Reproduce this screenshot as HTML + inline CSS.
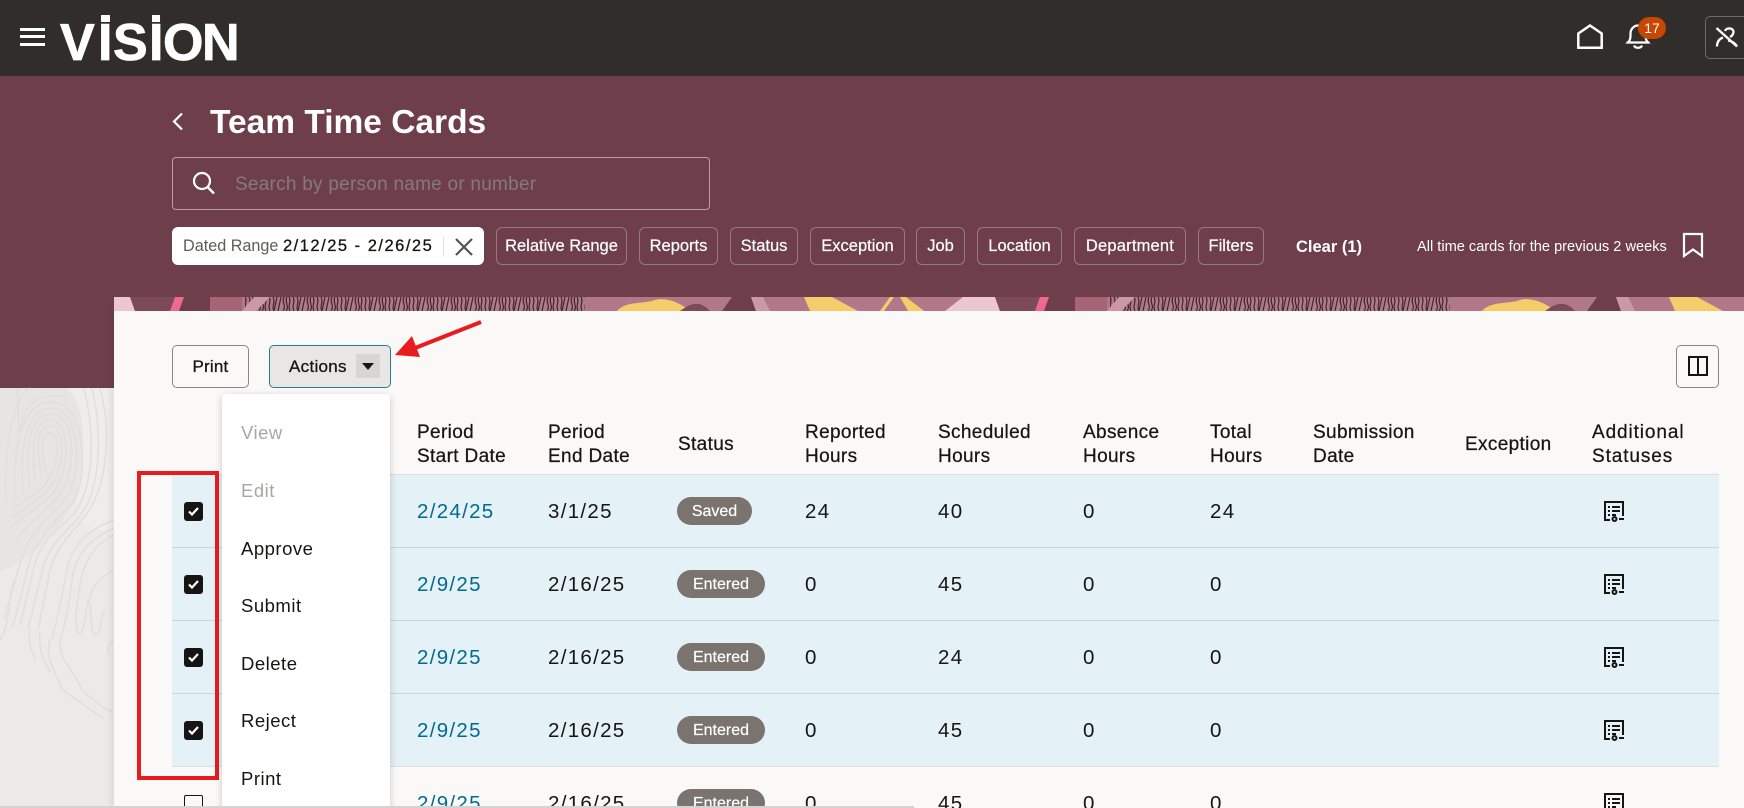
<!DOCTYPE html>
<html><head><meta charset="utf-8"><title>Team Time Cards</title>
<style>
html,body{margin:0;padding:0;width:1744px;height:808px;overflow:hidden}
#w{position:relative;width:1744px;height:808px;overflow:hidden;background:#ebeae8;font-family:"Liberation Sans",sans-serif;color:#161513;font-size:20.5px}
.a,.t,.c,.p,.b{position:absolute}
.t{white-space:nowrap;line-height:24px}
.c{top:227px;height:36px;border:1px solid rgba(255,255,255,.3);border-radius:6px;color:#fff;text-align:center;line-height:36px;font-size:16.5px;-webkit-text-stroke:.2px #fff;white-space:nowrap}
.h{font-size:19px;-webkit-text-stroke:.25px #161513;letter-spacing:.35px}
.d{letter-spacing:1.3px}
.l{color:#006b8f}
.p{left:677px;height:28px;border-radius:14px;background:#7a736e;color:#fff;text-align:center;font-size:16px;line-height:30px;-webkit-text-stroke:.2px #fff}
.r{position:absolute;left:172px;width:1547px;height:72px;background:#e4f1f7;border-bottom:1px solid #c9d6dd}
.b{left:184px;width:19px;height:19px;background:#161513;border-radius:3px}
.m{left:241px;font-size:18.5px;letter-spacing:.5px}
.lg{position:absolute;top:21px;font-weight:bold;font-size:52px;line-height:44px;color:#fff;-webkit-text-stroke:.8px #fff}
svg{position:absolute;overflow:visible}
</style></head><body><div id="w">

<!-- maroon & header -->
<div class="a" style="left:0;top:0;width:1744px;height:388px;background:#6e3f4a"></div>
<div class="a" style="left:0;top:0;width:1744px;height:76px;background:#312d2a"></div>

<!-- hamburger -->
<div class="a" style="left:20px;top:28px;width:25px;height:3px;background:#fff"></div>
<div class="a" style="left:20px;top:35px;width:25px;height:3px;background:#fff"></div>
<div class="a" style="left:20px;top:43px;width:25px;height:3px;background:#fff"></div>

<!-- logo -->
<span class="lg" style="left:60px;">V</span>
<span class="lg" style="left:98px;">I</span>
<span class="lg" style="left:113px;">S</span>
<span class="lg" style="left:149px;">I</span>
<span class="lg" style="left:163px;">O</span>
<span class="lg" style="left:202px;">N</span>
<div class="a" style="left:101px;top:15px;width:9px;height:7px;background:#fff"></div>
<div class="a" style="left:152px;top:15px;width:8px;height:7px;background:#fff"></div>

<!-- header icons -->
<svg style="left:1577px;top:24px" width="26" height="25" viewBox="0 0 26 25"><path d="M1.300 23.700V9.500L13 1.500 24.700 9.500V23.700Z" fill="none" stroke="#fff" stroke-width="2.500"/></svg>
<svg style="left:1626px;top:24px" width="24" height="26" viewBox="0 0 24 26"><path d="M2 18.500C5 15.500 4.500 12 4.500 9.500 4.500 5 8 1.500 12 1.500S19.500 5 19.500 9.500C19.500 12 19 15.500 22 18.500ZM0.500 18.500H23.500M8 21.500C9 24.500 15 24.500 16 21.500" fill="none" stroke="#fff" stroke-width="2.200"/></svg>
<div class="a" style="left:1638px;top:17px;width:28px;height:22px;border-radius:11px;background:#c74600;color:#fff;font-size:14px;line-height:22px;text-align:center">17</div>
<div class="a" style="left:1705px;top:16px;width:60px;height:41px;border:1px solid #6f6b68;border-radius:5px"></div>
<svg style="left:1715px;top:26px" width="24" height="24" viewBox="0 0 24 24"><path d="M1.500 2 22 20.500M10 5C11 1.500 18 1.500 18.500 5.500 18.500 8 17 10 15 11M8 11.500C4 13 2 16 2 20.500M13 14.500C17 15 20 17 22 20.500" fill="none" stroke="#fff" stroke-width="2.300"/></svg>

<!-- title -->
<svg style="left:172px;top:112px" width="12" height="19" viewBox="0 0 12 19"><path d="M10 1.500 2 9.500 10 17.500" fill="none" stroke="#fff" stroke-width="2.200"/></svg>
<div class="t" style="left:210px;top:105px;line-height:36px;font-size:33.500px;font-weight:bold;color:#fff">Team Time Cards</div>

<!-- search -->
<div class="a" style="left:172px;top:157px;width:536px;height:51px;border:1px solid rgba(255,255,255,.5);border-radius:4px"></div>
<svg style="left:192px;top:171px" width="24" height="23" viewBox="0 0 24 23"><circle cx="10" cy="10" r="8" fill="none" stroke="#fff" stroke-width="2.200"/><path d="M15.500 16 22 22.500" fill="none" stroke="#fff" stroke-width="2.400"/></svg>
<div class="t" style="left:235px;top:173px;font-size:19px;color:#857a7a;letter-spacing:.25px">Search by person name or number</div>

<!-- chips -->
<div class="a" style="left:172px;top:227px;width:312px;height:38px;background:#fff;border-radius:6px"></div>
<div class="t" style="left:183px;top:234px;font-size:16.200px;color:#5f5b58">Dated Range</div>
<div class="t" style="left:283px;top:234px;font-size:16.500px;color:#161513;letter-spacing:1.5px;-webkit-text-stroke:.3px #161513">2/12/25 - 2/26/25</div>
<div class="a" style="left:443px;top:237px;width:1px;height:19px;background:#e2e0de"></div>
<svg style="left:455px;top:238px" width="18" height="18" viewBox="0 0 18 18"><path d="M1 1 17 17M17 1 1 17" stroke="#575350" stroke-width="2.200" fill="none"/></svg>

<div class="c" style="left:496px;width:129px">Relative Range</div>
<div class="c" style="left:639px;width:77px">Reports</div>
<div class="c" style="left:730px;width:66px">Status</div>
<div class="c" style="left:810px;width:93px">Exception</div>
<div class="c" style="left:916px;width:47px">Job</div>
<div class="c" style="left:977px;width:83px">Location</div>
<div class="c" style="left:1074px;width:110px;letter-spacing:.2px">Department</div>
<div class="c" style="left:1198px;width:64px">Filters</div>
<div class="t" style="left:1296px;top:235px;font-size:16.500px;font-weight:bold;color:#fff">Clear (1)</div>
<div class="t" style="left:1417px;top:235px;font-size:14.600px;color:#fff">All time cards for the previous 2 weeks</div>
<svg style="left:1683px;top:233px" width="20" height="25" viewBox="0 0 20 25"><path d="M1 1H19V23L10 16.500 1 23Z" fill="none" stroke="#fff" stroke-width="2.200"/></svg>

<!-- background fingerprint -->
<svg style="left:0;top:388px" width="116" height="420" viewBox="0 388 116 420">
<path d="M0 388H65C84 400 88 440 76 500 60 530 30 560 0 572Z" fill="#e6e5e3"/>
<path d="M65 388H116V540C96 520 84 540 76 500 88 440 84 400 65 388Z" fill="#eeedec"/>
<g fill="none" stroke="#e0dfdd" stroke-width="1.500">
<path d="M46 472C40 445 42 433 50 433 58 433 60 452 53 470 47 487 32 498 12 508"/>
<path d="M42 476C35 445 38 426 50 426 62 426 65 452 58 472 52 492 32 504 10 518"/>
<path d="M36 482C30 445 34 420 50 420 66 420 70 452 62 476 55 500 30 510 10 528"/>
<path d="M30 488C24 445 30 414 52 414 72 414 76 454 67 480 59 505 34 516 16 540"/>
<path d="M24 496C18 450 26 408 52 408 76 408 82 456 72 486 64 510 36 520 24 552 16 575 10 600 4 620"/>
<path d="M16 500C12 450 20 402 52 402 82 402 88 460 78 492 68 516 42 526 30 560 22 590 18 610 12 628"/>
<path d="M6 500C4 450 12 398 30 388M84 388C94 430 94 470 82 500 72 525 46 530 36 560 28 590 24 610 20 625"/>
<path d="M92 388C102 430 100 475 88 503 76 527 54 535 44 565 36 595 32 615 28 628"/>
<path d="M100 388C112 430 106 480 92 505 78 530 58 540 50 570 44 600 40 620 38 630"/>
<path d="M18 388C18 405 18 425 20 432 24 400 40 395 60 396"/>
<path d="M0 640C10 625 8 600 14 580M114 520C88 530 70 545 66 575 60 610 55 625 52 640"/>
<path d="M114 528C92 538 76 552 72 580 68 612 64 628 60 642"/>
<path d="M114 535C98 542 84 558 80 585 76 610 74 625 78 632 84 640 86 610 88 600 92 605 90 635 96 636 102 632 100 612 106 610"/>
<path d="M60 640C58 660 74 670 82 690 94 700 104 710 114 712M50 640C44 660 56 670 62 690 76 698 92 712 104 718"/>
<path d="M40 632C38 650 44 660 50 672M30 628C28 640 30 650 36 660M114 570C96 580 90 590 90 600M114 640C108 645 106 650 110 655"/>
</g>
</svg>

<!-- card -->
<div class="a" style="left:114px;top:311px;width:1630px;height:497px;background:#fbf9f8;box-shadow:-4px 0 6px rgba(0,0,0,.06)"></div>

<!-- decorative strip -->
<svg style="left:114px;top:297px;overflow:hidden" width="1630" height="14" viewBox="114 297 1630 14">
<defs>
<pattern id="fp" x="0" y="297" width="24" height="14" patternUnits="userSpaceOnUse">
<rect width="24" height="14" fill="#b07a88"/>
<path d="M1 0C4 4 -1 9 2 14M5 0C8 4 3 9 6 14M9 0C12 5 7 9 10 14M13 0 10 14M17 0 14 14M20 0C17 5 23 9 19 14M23 0C20 5 26 9 22 14" stroke="#3f262e" stroke-width="1.200" fill="none"/>
</pattern>
<g id="tile">
<rect x="242" y="297" width="865" height="14" fill="#b07888"/>
<rect x="245" y="297" width="340" height="14" fill="url(#fp)"/>
<path d="M242 311 254 297H270L256 311Z" fill="#cc98a8"/>
<path d="M617 311C625 301 645 304 655 300 665 297 680 302 690 311Z" fill="#f2cd6a"/>
<path d="M680 311C690 304 698 300 708 309L710 311Z" fill="#7c4b57"/>
<path d="M722 311 732 297H751L756 311Z" fill="#6e3f4a"/>
<path d="M751 297H763L770 311H756Z" fill="#cc98a8"/>
<path d="M804 297H832L858 311H810Z" fill="#f2cd6a"/>
<path d="M890 297H894L884 311H880Z" fill="#f2cd6a"/>
<path d="M900 297 906 297 924 311H908Z" fill="#f2cd6a"/>
<path d="M963 297H995L1000 311H945Z" fill="#ebc8d0"/>
<path d="M995 297H1040L1036 311H1000Z" fill="#7c4b57"/>
<path d="M1040 297H1049L1044 311H1035Z" fill="#ee6a8a"/>
<path d="M1049 297H1075V311H1044Z" fill="#6e3f4a"/>
<path d="M1075 297H1107V311H1075Z" fill="#a66475"/>
</g>
</defs>
<use href="#tile" transform="translate(-865 0)"/>
<use href="#tile"/>
<use href="#tile" transform="translate(865 0)"/>
</svg>

<!-- toolbar -->
<div class="a" style="left:172px;top:345px;width:75px;height:41px;border:1px solid #8a8683;border-radius:5px;text-align:center;line-height:41px;font-size:17px;letter-spacing:.2px;-webkit-text-stroke:.3px #161513">Print</div>
<div class="a" style="left:269px;top:345px;width:120px;height:41px;border:1px solid #2a7a9b;border-radius:5px;background:#e9e7e6"></div>
<div class="t" style="left:289px;top:355px;font-size:17px;-webkit-text-stroke:.3px #161513;letter-spacing:.3px">Actions</div>
<div class="a" style="left:356px;top:354px;width:24px;height:24px;background:#d8d6d5"></div>
<svg style="left:362px;top:363px" width="12" height="7" viewBox="0 0 12 7"><path d="M0 0H12L6 7Z" fill="#161513"/></svg>
<div class="a" style="left:1676px;top:345px;width:41px;height:41px;border:1px solid #8a8683;border-radius:5px"></div>
<svg style="left:1688px;top:356px" width="20" height="20" viewBox="0 0 20 20"><path d="M1 1H19V19H1ZM10 1V19" fill="none" stroke="#161513" stroke-width="2"/></svg>

<!-- headers -->
<div class="t h" style="left:417px;top:421px">Period<br>Start Date</div>
<div class="t h" style="left:548px;top:421px">Period<br>End Date</div>
<div class="t h" style="left:678px;top:433px">Status</div>
<div class="t h" style="left:805px;top:421px">Reported<br>Hours</div>
<div class="t h" style="left:938px;top:421px">Scheduled<br>Hours</div>
<div class="t h" style="left:1083px;top:421px">Absence<br>Hours</div>
<div class="t h" style="left:1210px;top:421px">Total<br>Hours</div>
<div class="t h" style="left:1313px;top:421px">Submission<br>Date</div>
<div class="t h" style="left:1465px;top:433px">Exception</div>
<div class="t h" style="left:1592px;top:421px;letter-spacing:.9px">Additional<br>Statuses</div>
<div class="a" style="left:172px;top:474px;width:1547px;height:1px;background:#e0dedc"></div>

<!-- rows -->
<div class="r" style="top:475px"></div>
<div class="r" style="top:548px"></div>
<div class="r" style="top:621px"></div>
<div class="r" style="top:694px;border-bottom-color:#e0dedc"></div>

<!-- row 1 -->
<div class="t d l" style="left:417px;top:500px">2/24/25</div><div class="t d" style="left:548px;top:500px">3/1/25</div>
<div class="p" style="top:497px;width:75px">Saved</div>
<div class="t d" style="left:805px;top:500px">24</div><div class="t d" style="left:938px;top:500px">40</div><div class="t d" style="left:1083px;top:500px">0</div><div class="t d" style="left:1210px;top:500px">24</div>
<!-- row 2 -->
<div class="t d l" style="left:417px;top:573px">2/9/25</div><div class="t d" style="left:548px;top:573px">2/16/25</div>
<div class="p" style="top:570px;width:88px">Entered</div>
<div class="t d" style="left:805px;top:573px">0</div><div class="t d" style="left:938px;top:573px">45</div><div class="t d" style="left:1083px;top:573px">0</div><div class="t d" style="left:1210px;top:573px">0</div>
<!-- row 3 -->
<div class="t d l" style="left:417px;top:646px">2/9/25</div><div class="t d" style="left:548px;top:646px">2/16/25</div>
<div class="p" style="top:643px;width:88px">Entered</div>
<div class="t d" style="left:805px;top:646px">0</div><div class="t d" style="left:938px;top:646px">24</div><div class="t d" style="left:1083px;top:646px">0</div><div class="t d" style="left:1210px;top:646px">0</div>
<!-- row 4 -->
<div class="t d l" style="left:417px;top:719px">2/9/25</div><div class="t d" style="left:548px;top:719px">2/16/25</div>
<div class="p" style="top:716px;width:88px">Entered</div>
<div class="t d" style="left:805px;top:719px">0</div><div class="t d" style="left:938px;top:719px">45</div><div class="t d" style="left:1083px;top:719px">0</div><div class="t d" style="left:1210px;top:719px">0</div>
<!-- row 5 -->
<div class="t d l" style="left:417px;top:792px">2/9/25</div><div class="t d" style="left:548px;top:792px">2/16/25</div>
<div class="p" style="top:789px;width:88px">Entered</div>
<div class="t d" style="left:805px;top:792px">0</div><div class="t d" style="left:938px;top:792px">45</div><div class="t d" style="left:1083px;top:792px">0</div><div class="t d" style="left:1210px;top:792px">0</div>

<!-- status icons -->
<svg width="0" height="0" style="left:0;top:0"><defs><g id="si" fill="none" stroke="#161513" stroke-width="2"><path d="M6 19H1V1H19V15"/><path d="M4 6H6M8 6H16M4 10H6M8 10H16M4 14H6M8 14H12M15 18H20"/><circle cx="10.500" cy="18" r="2"/></g></defs></svg>
<svg style="left:1604px;top:500.500px" width="20" height="21" viewBox="0 0 20 21"><use href="#si"/></svg>
<svg style="left:1604px;top:573.500px" width="20" height="21" viewBox="0 0 20 21"><use href="#si"/></svg>
<svg style="left:1604px;top:646.500px" width="20" height="21" viewBox="0 0 20 21"><use href="#si"/></svg>
<svg style="left:1604px;top:719.500px" width="20" height="21" viewBox="0 0 20 21"><use href="#si"/></svg>
<svg style="left:1604px;top:792.500px" width="20" height="21" viewBox="0 0 20 21"><use href="#si"/></svg>

<!-- checkboxes -->
<div class="b" style="top:502px"></div><div class="b" style="top:575px"></div><div class="b" style="top:648px"></div><div class="b" style="top:721px"></div>
<div class="a" style="left:184px;top:795px;width:17px;height:17px;border:1px solid #161513;border-radius:2px"></div>
<svg style="left:184px;top:502px" width="19" height="19" viewBox="0 0 19 19"><path id="ck" d="M5 9.500 8 12.500 14 6" fill="none" stroke="#fff" stroke-width="2.200"/></svg>
<svg style="left:184px;top:575px" width="19" height="19" viewBox="0 0 19 19"><use href="#ck"/></svg>
<svg style="left:184px;top:648px" width="19" height="19" viewBox="0 0 19 19"><use href="#ck"/></svg>
<svg style="left:184px;top:721px" width="19" height="19" viewBox="0 0 19 19"><use href="#ck"/></svg>

<!-- red highlight -->
<div class="a" style="left:137px;top:471px;width:74px;height:301px;border:4px solid #e81c1f"></div>

<!-- menu -->
<div class="a" style="left:222px;top:394px;width:168px;height:440px;background:#fff;border-radius:4px;box-shadow:0 2px 8px rgba(0,0,0,.2)"></div>
<div class="t m" style="top:421px;color:#a9a7a5">View</div>
<div class="t m" style="top:479px;color:#a9a7a5">Edit</div>
<div class="t m" style="top:537px">Approve</div>
<div class="t m" style="top:594px">Submit</div>
<div class="t m" style="top:652px">Delete</div>
<div class="t m" style="top:709px">Reject</div>
<div class="t m" style="top:767px">Print</div>

<!-- red arrow -->
<svg style="left:0;top:0" width="1744" height="808" viewBox="0 0 1744 808"><path d="M481 322 410 350" stroke="#e81c1f" stroke-width="4" fill="none"/><path d="M395 355 412 336 420 357Z" fill="#e81c1f"/></svg>

<!-- bottom bar -->
<div class="a" style="left:0;top:806px;width:914px;height:2px;background:#d4d3d2"></div>
</div></body></html>
